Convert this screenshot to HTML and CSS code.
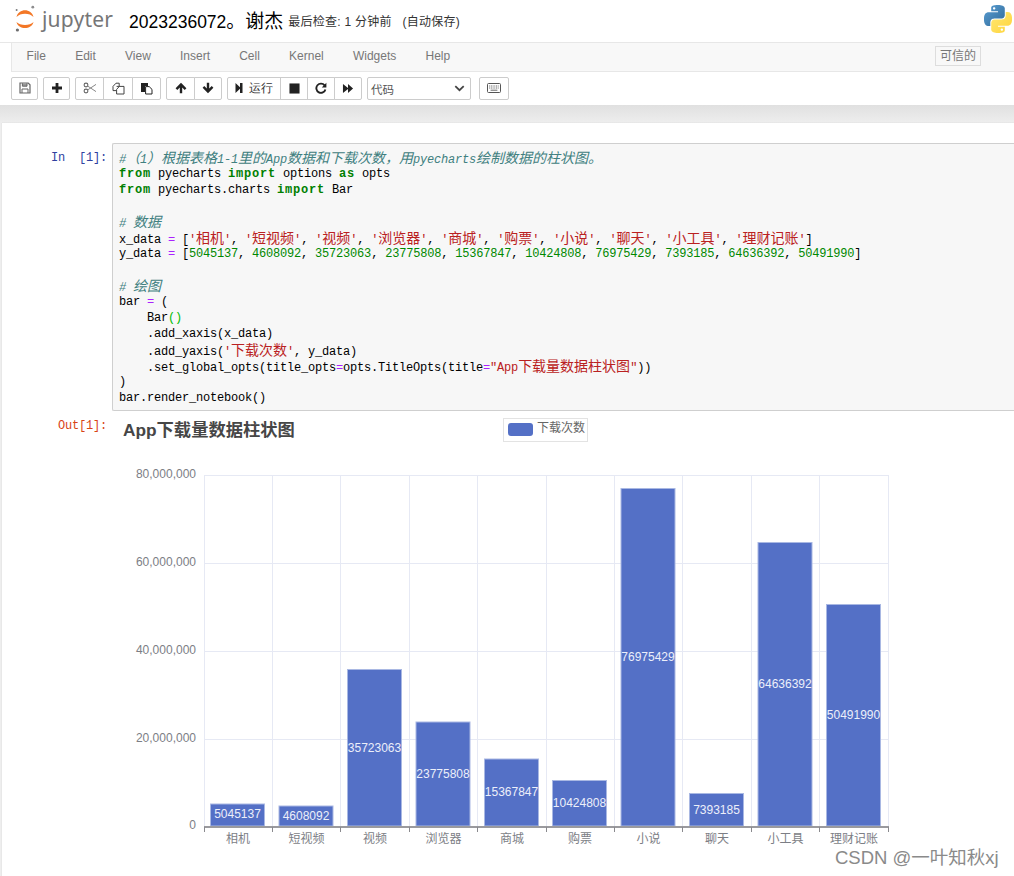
FILE: index.html
```html
<!DOCTYPE html>
<html lang="zh">
<head>
    <meta charset="UTF-8">
    <title>2023236072。谢杰 - Jupyter Notebook</title>
    <link rel="stylesheet" href="styles.css">
</head>
<body>
    <header class="top-bar">
        <div class="logo">
            <svg class="logo-mark" viewBox="0 0 20 28" width="20" height="28">
                <path d="M1.5 12C3.5 3 16.5 3 18.5 12C15 7.5 5 7.5 1.5 12Z" fill="#f37726"/>
                <path d="M1.5 17C3.5 25 16.5 25 18.5 17C15 21 5 21 1.5 17Z" fill="#f37726"/>
                <circle cx="17.8" cy="2.2" r="1.4" fill="#8d8d8e"/>
                <circle cx="1.6" cy="5" r="1" fill="#7a7a7b"/>
                <circle cx="2.4" cy="25" r="1.6" fill="#6d6d6e"/>
            </svg>
            <span class="logo-text">jupyter</span>
        </div>
        <span class="nb-name">2023236072<span class="nb-cn">。谢杰</span></span>
        <span class="checkpoint">最后检查: 1 分钟前 &nbsp;&nbsp;(自动保存)</span>
        <svg class="py-logo" viewBox="0 0 24 24" width="28" height="28">
            <defs>
                <linearGradient id="pyBlue" x1="0" y1="0" x2="1" y2="1">
                    <stop offset="0" stop-color="#5a9fd4"/>
                    <stop offset="1" stop-color="#306998"/>
                </linearGradient>
                <linearGradient id="pyYellow" x1="0" y1="0" x2="1" y2="1">
                    <stop offset="0" stop-color="#ffe873"/>
                    <stop offset="1" stop-color="#ffd43b"/>
                </linearGradient>
            </defs>
            <path fill="url(#pyBlue)" d="M14.25.18l.9.2.73.26.59.3.45.32.34.34.25.34.16.33.1.3.04.26.02.2-.01.13V8.5l-.05.63-.13.55-.21.46-.26.38-.3.31-.33.25-.35.19-.35.14-.33.1-.3.07-.26.04-.21.02H8.77l-.69.05-.59.14-.5.22-.41.27-.33.32-.27.35-.2.36-.15.37-.1.35-.07.32-.04.27-.02.21v3.06H3.17l-.21-.03-.28-.07-.32-.12-.35-.18-.36-.26-.36-.36-.35-.46-.32-.59-.28-.73-.21-.88-.14-1.05-.05-1.23.06-1.22.16-1.04.24-.87.32-.71.36-.57.4-.44.42-.33.42-.24.4-.16.36-.1.32-.05.24-.01h.16l.06.01h8.16v-.83H6.18l-.01-2.75-.02-.37.05-.34.11-.31.17-.28.25-.26.31-.23.38-.2.44-.18.51-.15.58-.12.64-.1.71-.06.77-.04.84-.02 1.27.05zm-6.3 1.98l-.23.33-.08.41.08.41.23.34.33.22.41.09.41-.09.33-.22.23-.34.08-.41-.08-.41-.23-.33-.33-.22-.41-.09-.41.09z"/>
            <path fill="url(#pyYellow)" d="M21.04 6.11l.28.06.32.12.35.18.36.27.36.35.35.47.32.59.28.73.21.88.14 1.04.05 1.23-.06 1.23-.16 1.04-.24.86-.32.71-.36.57-.4.45-.42.33-.42.24-.4.16-.36.09-.32.05-.24.02-.16-.01h-8.22v.82h5.84l.01 2.76.02.36-.05.34-.11.31-.17.29-.25.25-.31.24-.38.2-.44.17-.51.15-.58.13-.64.09-.71.07-.77.04-.84.01-1.27-.04-1.07-.14-.9-.2-.73-.25-.59-.3-.45-.33-.34-.34-.25-.34-.16-.33-.1-.3-.04-.25-.02-.2.01-.13v-5.34l.05-.64.13-.54.21-.46.26-.38.3-.32.33-.24.35-.2.35-.14.33-.1.3-.06.26-.04.21-.02.13-.01h5.84l.69-.05.59-.14.5-.21.41-.28.33-.32.27-.35.2-.36.15-.36.1-.35.07-.32.04-.28.02-.21V6.07h2.09l.14.01zm-6.47 14.25l-.23.33-.08.41.08.41.23.33.33.23.41.08.41-.08.33-.23.23-.33.08-.41-.08-.41-.23-.33-.33-.23-.41-.08-.41.08z"/>
        </svg>
    </header>

    <div class="menu-wrap">
        <nav class="menu-bar">
            <a class="menu-item">File</a>
            <a class="menu-item">Edit</a>
            <a class="menu-item">View</a>
            <a class="menu-item">Insert</a>
            <a class="menu-item">Cell</a>
            <a class="menu-item">Kernel</a>
            <a class="menu-item">Widgets</a>
            <a class="menu-item">Help</a>
            <span class="trusted">可信的</span>
        </nav>
    </div>

    <div class="toolbar">
        <div class="btn-group">
            <button class="tb-btn w27">
                <svg viewBox="0 0 12 12" width="12" height="12"><path d="M1 1h8.2L11 2.8V11H1Z" fill="none" stroke="#666" stroke-width="1.2"/><path d="M3.4 1.2v3h4.6v-3" fill="#999" stroke="#666"/><path d="M3 11V7h6v4" fill="none" stroke="#666"/></svg>
            </button>
        </div>
        <div class="btn-group">
            <button class="tb-btn w27">
                <svg viewBox="0 0 12 12" width="12" height="12"><path d="M4.6 1h2.8v3.6H11v2.8H7.4V11H4.6V7.4H1V4.6h3.6Z" fill="#222"/></svg>
            </button>
        </div>
        <div class="btn-group">
            <button class="tb-btn w29">
                <svg viewBox="0 0 14 12" width="14" height="12"><circle cx="3" cy="3" r="1.9" fill="none" stroke="#666" stroke-width="1.1"/><circle cx="3" cy="9" r="1.9" fill="none" stroke="#666" stroke-width="1.1"/><path d="M4.6 4 13 9.6M4.6 8 13 2.4" stroke="#888" stroke-width="1"/></svg>
            </button>
            <button class="tb-btn w30">
                <svg viewBox="0 0 13 13" width="13" height="13"><path d="M4.2 8.6H1V4.4L4 1.2h3.2v3" fill="none" stroke="#444" stroke-width="1"/><path d="M4.6 4.4H12V12H4.6V7.4L7.2 4.6" fill="none" stroke="#444" stroke-width="1"/></svg>
            </button>
            <button class="tb-btn w29">
                <svg viewBox="0 0 13 13" width="13" height="13"><path d="M1 1h7v3H5v6H1Z" fill="#222"/><path d="M5.6 4.6h3.6L12 7.4V12H5.6Z" fill="#fff" stroke="#222" stroke-width="1"/></svg>
            </button>
        </div>
        <div class="btn-group">
            <button class="tb-btn w29">
                <svg viewBox="0 0 12 12" width="12" height="12"><path d="M6 .8 11.4 6.2 9.7 7.9 7.2 5.4V11.2H4.8V5.4L2.3 7.9.6 6.2Z" fill="#222"/></svg>
            </button>
            <button class="tb-btn w28">
                <svg viewBox="0 0 12 12" width="12" height="12"><path d="M6 11.2.6 5.8 2.3 4.1 4.8 6.6V.8H7.2V6.6L9.7 4.1 11.4 5.8Z" fill="#222"/></svg>
            </button>
        </div>
        <div class="btn-group">
            <button class="tb-btn w54">
                <svg viewBox="0 0 8 12" width="8" height="12"><path d="M0.5 1 5 5.2V1H7.5V11H5V6.8L.5 11Z" fill="#222"/></svg>
                <span class="run-label">运行</span>
            </button>
            <button class="tb-btn w28">
                <svg viewBox="0 0 12 12" width="11" height="11"><path d="M.5.5h11v11H.5Z" fill="#222"/></svg>
            </button>
            <button class="tb-btn w28">
                <svg viewBox="0 0 12 12" width="12" height="12"><path d="M9.6 3.4A4.6 4.6 0 1 0 10.4 7.4" fill="none" stroke="#222" stroke-width="1.9"/><path d="M11.4 .8V5.4H6.8Z" fill="#222"/></svg>
            </button>
            <button class="tb-btn w28">
                <svg viewBox="0 0 12 12" width="12" height="11"><path d="M.5 1 6 5.4V1l5.5 5-5.5 5V6.6L.5 11Z" fill="#222"/></svg>
            </button>
        </div>
        <div class="cell-type">
            <span class="cell-type-text">代码</span>
            <svg viewBox="0 0 12 8" width="11" height="7"><path d="M1.2 1.4 6 6 10.8 1.4" fill="none" stroke="#444" stroke-width="2"/></svg>
        </div>
        <button class="tb-btn w30 kb-btn">
            <svg viewBox="0 0 14 10" width="14" height="10"><rect x=".5" y=".5" width="13" height="9" rx="1" fill="none" stroke="#555"/><path d="M2.2 3h9.6M2.2 5h9.6" stroke="#666" stroke-dasharray="1 .7"/><path d="M3.6 7.2h6.8" stroke="#666"/></svg>
        </button>
    </div>

    <div class="site">
        <div class="notebook">
            <div class="cell-row">
                <div class="prompt in">In&nbsp;&nbsp;[1]:</div>
                <div class="input-area">
                    <div class="ln cm">#<span class="ch">（</span>1<span class="ch">）根据表格</span>1-1<span class="ch">里的</span>App<span class="ch">数据和下载次数，用</span>pyecharts<span class="ch">绘制数据的柱状图。</span></div>
                    <div class="ln"><b class="kw">from</b> pyecharts <b class="kw">import</b> options <b class="kw">as</b> opts</div>
                    <div class="ln"><b class="kw">from</b> pyecharts.charts <b class="kw">import</b> Bar</div>
                    <div class="ln"></div>
                    <div class="ln cm"># <span class="ch">数据</span></div>
                    <div class="ln">x_data <i class="op">=</i> [<i class="st">'<span class="ch">相机</span>'</i>, <i class="st">'<span class="ch">短视频</span>'</i>, <i class="st">'<span class="ch">视频</span>'</i>, <i class="st">'<span class="ch">浏览器</span>'</i>, <i class="st">'<span class="ch">商城</span>'</i>, <i class="st">'<span class="ch">购票</span>'</i>, <i class="st">'<span class="ch">小说</span>'</i>, <i class="st">'<span class="ch">聊天</span>'</i>, <i class="st">'<span class="ch">小工具</span>'</i>, <i class="st">'<span class="ch">理财记账</span>'</i>]</div>
                    <div class="ln">y_data <i class="op">=</i> [<i class="nm">5045137</i>, <i class="nm">4608092</i>, <i class="nm">35723063</i>, <i class="nm">23775808</i>, <i class="nm">15367847</i>, <i class="nm">10424808</i>, <i class="nm">76975429</i>, <i class="nm">7393185</i>, <i class="nm">64636392</i>, <i class="nm">50491990</i>]</div>
                    <div class="ln"></div>
                    <div class="ln cm"># <span class="ch">绘图</span></div>
                    <div class="ln">bar <i class="op">=</i> (</div>
                    <div class="ln">    Bar<i class="par">()</i></div>
                    <div class="ln">    .add_xaxis(x_data)</div>
                    <div class="ln">    .add_yaxis(<i class="st">'<span class="ch">下载次数</span>'</i>, y_data)</div>
                    <div class="ln">    .set_global_opts(title_opts<i class="op">=</i>opts.TitleOpts(title<i class="op">=</i><i class="st">"App<span class="ch">下载量数据柱状图</span>"</i>))</div>
                    <div class="ln">)</div>
                    <div class="ln">bar.render_notebook()</div>
                </div>
            </div>

            <div class="output-row">
                <div class="prompt out">Out[1]:</div>
                <div class="chart-wrap">
                    <svg class="chart" width="800" height="465" viewBox="112 411 800 465">
                        <text class="c-title" x="123" y="436">App下载量数据柱状图</text>

                        <rect x="503.5" y="418.5" width="84" height="23" fill="#fff" stroke="#e3e3e3"/>
                        <rect x="508" y="423" width="25" height="13" rx="3" fill="#5470c6"/>
                        <text class="c-legend" x="537" y="432">下载次数</text>

                        <g class="grid">
                            <path d="M204 475.5H888M204 563.5H888M204 651.5H888M204 739.5H888"/>
                            <path d="M204.5 475V826M272.5 475V826M340.5 475V826M409.5 475V826M477.5 475V826M546.5 475V826M614.5 475V826M682.5 475V826M751.5 475V826M819.5 475V826M888.5 475V826"/>
                        </g>

                        <g class="c-y">
                            <text x="196" y="478">80,000,000</text>
                            <text x="196" y="566">60,000,000</text>
                            <text x="196" y="654">40,000,000</text>
                            <text x="196" y="742">20,000,000</text>
                            <text x="196" y="829">0</text>
                        </g>

                        <g class="bars">
                            <rect x="210.5" y="804" width="54" height="22"/>
                            <rect x="279" y="806" width="54" height="20"/>
                            <rect x="347.5" y="669.5" width="54" height="156.5"/>
                            <rect x="416" y="722" width="54" height="104"/>
                            <rect x="484.5" y="759" width="54" height="67"/>
                            <rect x="552.5" y="780.5" width="54" height="45.5"/>
                            <rect x="621" y="488.5" width="54" height="337.5"/>
                            <rect x="689.5" y="793.5" width="54" height="32.5"/>
                            <rect x="758" y="542.5" width="54" height="283.5"/>
                            <rect x="826.5" y="604.5" width="54" height="221.5"/>
                        </g>

                        <g class="c-val">
                            <text x="237.5" y="818">5045137</text>
                            <text x="306" y="820">4608092</text>
                            <text x="374.5" y="752">35723063</text>
                            <text x="443" y="778">23775808</text>
                            <text x="511.5" y="796">15367847</text>
                            <text x="579.5" y="807">10424808</text>
                            <text x="648" y="661">76975429</text>
                            <text x="716.5" y="814">7393185</text>
                            <text x="785" y="688">64636392</text>
                            <text x="853.5" y="719">50491990</text>
                        </g>

                        <path class="axis" d="M204 827H889"/>
                        <path class="ticks" d="M204.5 827V832M272.5 827V832M340.5 827V832M409.5 827V832M477.5 827V832M546.5 827V832M614.5 827V832M682.5 827V832M751.5 827V832M819.5 827V832M888.5 827V832"/>

                        <g class="c-x">
                            <text x="238" y="843">相机</text>
                            <text x="306.5" y="843">短视频</text>
                            <text x="375" y="843">视频</text>
                            <text x="443.5" y="843">浏览器</text>
                            <text x="512" y="843">商城</text>
                            <text x="580" y="843">购票</text>
                            <text x="648.5" y="843">小说</text>
                            <text x="717" y="843">聊天</text>
                            <text x="785.5" y="843">小工具</text>
                            <text x="854" y="843">理财记账</text>
                        </g>
                    </svg>
                </div>
            </div>
        </div>
    </div>

    <div class="watermark">CSDN @一叶知秋xj</div>
</body>
</html>
```

FILE: styles.css
```css
* {
    margin: 0;
    padding: 0;
    box-sizing: border-box;
}

html, body {
    height: 876px;
    overflow: hidden;
}

body {
    position: relative;
    background-color: #fff;
    color: #000;
    font-family: "Liberation Sans", "Noto Sans CJK SC", sans-serif;
    font-size: 12px;
}

/* header */
.top-bar {
    display: flex;
    align-items: center;
    height: 42px;
    padding: 0 2px 4px 15px;
    background-color: #fff;
}

.logo {
    display: flex;
    align-items: center;
    width: 114px;
}

.logo-text {
    margin-left: 7px;
    color: #767677;
    font-family: "Noto Sans", sans-serif;
    font-size: 21px;
    letter-spacing: 0.2px;
    line-height: 28px;
}

.nb-name {
    font-size: 17.5px;
    color: #000;
}

.nb-cn {
    font-size: 19px;
}

.checkpoint {
    margin-left: 5px;
    margin-top: 2px;
    color: #333;
    letter-spacing: 0.25px;
}

.py-logo {
    margin-left: auto;
}

/* menu */
.menu-wrap {
    border-top: 1px solid #e7e7e7;
    padding-left: 11px;
}

.menu-bar {
    display: flex;
    align-items: center;
    height: 29px;
    padding-bottom: 2px;
    padding-right: 33px;
    background-color: #f8f8f8;
    border-left: 1px solid #e7e7e7;
    border-bottom: 1px solid #e7e7e7;
}

.menu-item {
    padding: 0 14.6px;
    color: #777;
    font-size: 12px;
}

.trusted {
    margin-left: auto;
    width: 46px;
    height: 20px;
    line-height: 18px;
    text-align: center;
    color: #777;
    border: 1px solid #ddd;
}

/* toolbar */
.toolbar {
    display: flex;
    align-items: center;
    gap: 5px;
    height: 33px;
    padding: 0 0 1px 11px;
}

.btn-group {
    display: flex;
}

.tb-btn {
    display: flex;
    align-items: center;
    justify-content: center;
    height: 23px;
    background-color: #fff;
    border: 1px solid #ccc;
    border-radius: 2px;
    margin-left: -1px;
}

.btn-group .tb-btn:first-child {
    margin-left: 0;
}

.btn-group .tb-btn:not(:last-child) {
    border-top-right-radius: 0;
    border-bottom-right-radius: 0;
}

.btn-group .tb-btn:not(:first-child) {
    border-top-left-radius: 0;
    border-bottom-left-radius: 0;
}

.w27 { width: 27px; }
.w28 { width: 28px; }
.w29 { width: 29px; }
.w30 { width: 30px; }
.w54 { width: 54px; }

.run-label {
    margin-left: 6px;
    color: #333;
    font-size: 12px;
}

.cell-type {
    display: flex;
    align-items: center;
    justify-content: space-between;
    width: 104px;
    height: 23px;
    padding: 0 5px 0 3px;
    background-color: #fff;
    border: 1px solid #ccc;
    border-radius: 2px;
}

.cell-type-text {
    margin-top: 2px;
    color: #555;
    font-size: 11.5px;
}

.kb-btn {
    margin-left: 3px;
}

/* notebook area */
.site {
    height: 771px;
    padding: 18px 0 0 2px;
    background: linear-gradient(#e0e0e0, #eeeeee 18px);
}

.notebook {
    height: 100%;
    background-color: #fff;
    box-shadow: 0 0 1px rgba(0, 0, 0, 0.15);
    padding-top: 20px;
}

.cell-row {
    display: flex;
}

.output-row {
    display: flex;
}

.prompt {
    width: 110px;
    flex: 0 0 110px;
    padding-right: 5px;
    text-align: right;
    font-family: "Liberation Mono", monospace;
    font-size: 12px;
    letter-spacing: -0.2px;
}

.prompt.in {
    color: #303f9f;
    padding-top: 7px;
    line-height: 16px;
}

.prompt.out {
    color: #d84315;
    padding-top: 7px;
    line-height: 16px;
}

.input-area {
    flex: 1;
    padding: 6px 0 4px 6px;
    background-color: #f7f7f7;
    border: 1px solid #cfcfcf;
    border-right: none;
    border-radius: 2px 0 0 2px;
    font-family: "Liberation Mono", monospace;
    font-size: 12px;
    letter-spacing: -0.2px;
    color: #000;
}

.ln {
    height: 16px;
    line-height: 16px;
    white-space: pre;
}

.ch {
    font-family: "Noto Sans CJK SC", sans-serif;
    font-size: 14px;
    line-height: 1;
    letter-spacing: 0;
}

.cm {
    color: #408080;
    font-style: italic;
}

.kw {
    color: #008000;
    font-weight: bold;
    letter-spacing: 0.8px;
}

.op {
    color: #aa22ff;
    font-style: normal;
}

.st {
    color: #ba2121;
    font-style: normal;
}

.nm {
    color: #080;
    font-style: normal;
}

.par {
    color: #0b0;
    font-style: normal;
}

/* chart */
.chart-wrap {
    flex: 1;
}

.chart {
    display: block;
}

.chart text {
    font-family: "Liberation Sans", "Noto Sans CJK SC", sans-serif;
}

.chart .c-title {
    font-size: 17.3px;
    font-weight: bold;
    fill: #464646;
}

.chart .c-legend {
    font-size: 12px;
    fill: #666;
}

.grid path {
    fill: none;
    stroke: #e6e9f4;
    stroke-width: 1;
}

.chart .c-y text {
    font-size: 12px;
    fill: #7c7e85;
    text-anchor: end;
}

.bars rect {
    fill: #5470c6;
    stroke: #a9b8e3;
    stroke-width: 1;
}

.chart .c-val text {
    font-size: 12px;
    fill: #eceffa;
    text-anchor: middle;
}

.axis {
    fill: none;
    stroke: #9a9a9e;
    stroke-width: 2;
}

.ticks {
    fill: none;
    stroke: #8a8a8e;
    stroke-width: 1;
}

.chart .c-x text {
    font-size: 12px;
    fill: #7c7e85;
    text-anchor: middle;
}

/* overlay */
.watermark {
    position: absolute;
    left: 835px;
    top: 847px;
    color: #8a8a8a;
    font-size: 18.5px;
    line-height: 22px;
    white-space: nowrap;
    text-shadow: 0 0 1px #fff;
}
```
